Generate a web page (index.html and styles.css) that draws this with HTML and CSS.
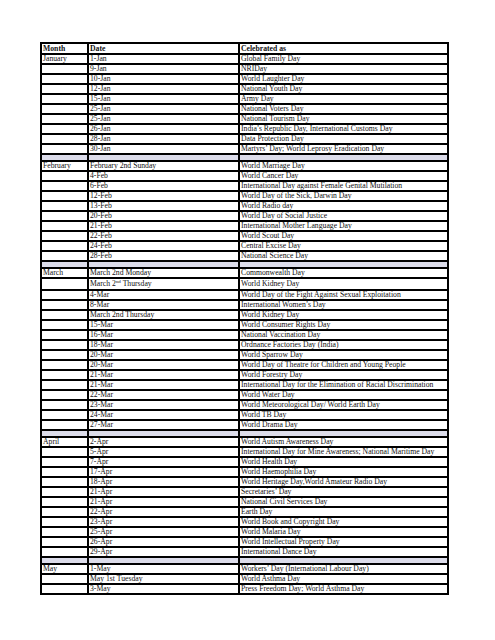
FILE: index.html
```html
<!DOCTYPE html>
<html lang="en">
<head>
<meta charset="utf-8">
<title>Important Days</title>
<link rel="stylesheet" href="styles.css">
</head>
<body>
<div class="page">
<table class="days">
<colgroup><col class="c-month"><col class="c-date"><col class="c-cel"></colgroup>
<thead>
<tr class="head"><th>Month</th><th>Date</th><th>Celebrated as</th></tr>
</thead>
<tbody>
<tr><td>January</td><td>1-Jan</td><td>Global Family Day</td></tr>
<tr><td></td><td>9-Jan</td><td>NRIDay</td></tr>
<tr><td></td><td>10-Jan</td><td>World Laughter Day</td></tr>
<tr><td></td><td>12-Jan</td><td>National Youth Day</td></tr>
<tr><td></td><td>15-Jan</td><td>Army Day</td></tr>
<tr><td></td><td>25-Jan</td><td>National Voters Day</td></tr>
<tr><td></td><td>25-Jan</td><td>National Tourism Day</td></tr>
<tr><td></td><td>26-Jan</td><td>India’s Republic Day, International Customs Day</td></tr>
<tr><td></td><td>28-Jan</td><td>Data Protection Day</td></tr>
<tr><td></td><td>30-Jan</td><td>Martyrs’ Day; World Leprosy Eradication Day</td></tr>
<tr class="gap"><td></td><td></td><td></td></tr>
<tr><td>February</td><td>February 2nd Sunday</td><td>World Marriage Day</td></tr>
<tr><td></td><td>4-Feb</td><td>World Cancer Day</td></tr>
<tr><td></td><td>6-Feb</td><td>International Day against Female Genital Mutilation</td></tr>
<tr><td></td><td>12-Feb</td><td>World Day of the Sick, Darwin Day</td></tr>
<tr><td></td><td>13-Feb</td><td>World Radio day</td></tr>
<tr><td></td><td>20-Feb</td><td>World Day of Social Justice</td></tr>
<tr><td></td><td>21-Feb</td><td>International Mother Language Day</td></tr>
<tr><td></td><td>22-Feb</td><td>World Scout Day</td></tr>
<tr><td></td><td>24-Feb</td><td>Central Excise Day</td></tr>
<tr><td></td><td>28-Feb</td><td>National Science Day</td></tr>
<tr class="gap"><td></td><td></td><td></td></tr>
<tr><td>March</td><td>March 2nd Monday</td><td>Commonwealth Day</td></tr>
<tr class="tall"><td></td><td>March 2<sup>nd</sup> Thursday</td><td>World Kidney Day</td></tr>
<tr><td></td><td>4-Mar</td><td>World Day of the Fight Against Sexual Exploitation</td></tr>
<tr><td></td><td>8-Mar</td><td>International Women’s Day</td></tr>
<tr><td></td><td>March 2nd Thursday</td><td>World Kidney Day</td></tr>
<tr><td></td><td>15-Mar</td><td>World Consumer Rights Day</td></tr>
<tr><td></td><td>16-Mar</td><td>National Vaccination Day</td></tr>
<tr><td></td><td>18-Mar</td><td>Ordnance Factories Day (India)</td></tr>
<tr><td></td><td>20-Mar</td><td>World Sparrow Day</td></tr>
<tr><td></td><td>20-Mar</td><td>World Day of Theatre for Children and Young People</td></tr>
<tr><td></td><td>21-Mar</td><td>World Forestry Day</td></tr>
<tr><td></td><td>21-Mar</td><td>International Day for the Elimination of Racial Discrimination</td></tr>
<tr><td></td><td>22-Mar</td><td>World Water Day</td></tr>
<tr><td></td><td>23-Mar</td><td>World Meteorological Day/ World Earth Day</td></tr>
<tr><td></td><td>24-Mar</td><td>World TB Day</td></tr>
<tr><td></td><td>27-Mar</td><td>World Drama Day</td></tr>
<tr class="gap"><td></td><td></td><td></td></tr>
<tr><td>April</td><td>2-Apr</td><td>World Autism Awareness Day</td></tr>
<tr><td></td><td>5-Apr</td><td>International Day for Mine Awareness; National Maritime Day</td></tr>
<tr><td></td><td>7-Apr</td><td>World Health Day</td></tr>
<tr><td></td><td>17-Apr</td><td>World Haemophilia Day</td></tr>
<tr><td></td><td>18-Apr</td><td>World Heritage Day,World Amateur Radio Day</td></tr>
<tr><td></td><td>21-Apr</td><td>Secretaries’ Day</td></tr>
<tr><td></td><td>21-Apr</td><td>National Civil Services Day</td></tr>
<tr><td></td><td>22-Apr</td><td>Earth Day</td></tr>
<tr><td></td><td>23-Apr</td><td>World Book and Copyright Day</td></tr>
<tr><td></td><td>25-Apr</td><td>World Malaria Day</td></tr>
<tr><td></td><td>26-Apr</td><td>World Intellectual Property Day</td></tr>
<tr><td></td><td>29-Apr</td><td>International Dance Day</td></tr>
<tr class="gap"><td></td><td></td><td></td></tr>
<tr><td>May</td><td>1-May</td><td>Workers’ Day (International Labour Day)</td></tr>
<tr><td></td><td>May 1st Tuesday</td><td>World Asthma Day</td></tr>
<tr><td></td><td>3-May</td><td>Press Freedom Day; World Asthma Day</td></tr>
</tbody>
</table>
</div>
</body>
</html>
```

FILE: styles.css
```css
html, body {
  margin: 0;
  padding: 0;
  background: #ffffff;
}

.page {
  padding: 42px 0 0 40px;
}

.days {
  border-collapse: collapse;
  table-layout: fixed;
  width: 407px;
  font-family: "Liberation Serif", "Times New Roman", serif;
  font-size: 7.7px;
  color: #111;
}

.c-month { width: 47px; }
.c-date { width: 151px; }
.c-cel { width: 209px; }

.days th,
.days td {
  border: 2px solid #000;
  padding: 0 1px;
  height: 8px;
  line-height: 8px;
  text-align: left;
  vertical-align: bottom;
  white-space: nowrap;
  overflow: hidden;
}

.days th {
  font-weight: bold;
  height: 9px;
  line-height: 9px;
}

.days .tall td {
  height: 10px;
  line-height: 10px;
}

.days sup {
  font-size: 5px;
  line-height: 0;
  vertical-align: 3px;
}

.days .gap td {
  height: 5px;
  line-height: 5px;
  background: #dcdcea;
}
```
